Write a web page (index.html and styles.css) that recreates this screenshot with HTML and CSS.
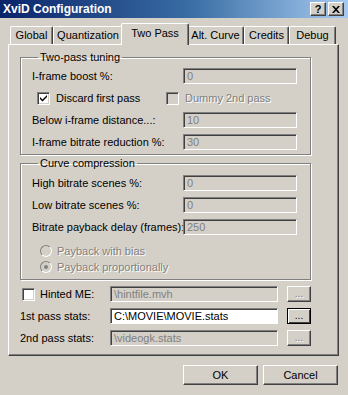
FILE: index.html
```html
<!DOCTYPE html>
<html lang="en">
<head>
    <meta charset="UTF-8">
    <meta name="viewport" content="width=device-width, initial-scale=1.0">
    <title>XviD Configuration</title>
    <link rel="stylesheet" href="styles.css">
</head>
<body>
    <div class="window">
        <div class="titlebar">
            <span class="title">XviD Configuration</span>
            <div class="caption-btns">
                <span class="cbtn help">?</span>
                <span class="cbtn close">
                    <svg width="8" height="7" viewBox="0 0 8 7"><path d="M0 0h2l2 2.2 2-2.2h2l-3 3.5 3 3.5h-2l-2-2.2-2 2.2h-2l3-3.5z" fill="#000"/></svg>
                </span>
            </div>
        </div>

        <div class="tabs">
            <div class="tab t-global">Global</div>
            <div class="tab t-quant">Quantization</div>
            <div class="tab t-two active">Two Pass</div>
            <div class="tab t-alt">Alt. Curve</div>
            <div class="tab t-credits">Credits</div>
            <div class="tab t-debug">Debug</div>
        </div>

        <div class="panel">
            <fieldset class="group group-tuning">
                <legend>Two-pass tuning</legend>
                <div class="field-row">
                    <label>I-frame boost %:</label>
                    <div class="edit disabled">0</div>
                </div>
                <div class="check-row">
                    <div class="check-item discard">
                        <span class="checkbox checked">
                            <svg width="7" height="7" viewBox="0 0 7 7"><path d="M0 2l2.5 2.5L7 0v2L2.5 6.5 0 4z" fill="#000"/></svg>
                        </span>
                        <span>Discard first pass</span>
                    </div>
                    <div class="check-item dummy dim">
                        <span class="checkbox disabled"></span>
                        <span>Dummy 2nd pass</span>
                    </div>
                </div>
                <div class="field-row">
                    <label>Below i-frame distance...:</label>
                    <div class="edit disabled">10</div>
                </div>
                <div class="field-row">
                    <label>I-frame bitrate reduction %:</label>
                    <div class="edit disabled">30</div>
                </div>
            </fieldset>

            <fieldset class="group group-curve">
                <legend>Curve compression</legend>
                <div class="field-row">
                    <label>High bitrate scenes %:</label>
                    <div class="edit disabled">0</div>
                </div>
                <div class="field-row">
                    <label>Low bitrate scenes %:</label>
                    <div class="edit disabled">0</div>
                </div>
                <div class="field-row">
                    <label>Bitrate payback delay (frames):</label>
                    <div class="edit disabled">250</div>
                </div>
                <div class="radios dim">
                    <div class="radio-item"><span class="radio"></span><span>Payback with bias</span></div>
                    <div class="radio-item"><span class="radio on"></span><span>Payback proportionally</span></div>
                </div>
            </fieldset>

            <div class="file-rows">
                <div class="file-row">
                    <div class="file-label hinted">
                        <span class="checkbox"></span>
                        <span>Hinted ME:</span>
                    </div>
                    <div class="edit disabled wide">\hintfile.mvh</div>
                    <div class="btn small dim">...</div>
                </div>
                <div class="file-row">
                    <div class="file-label">1st pass stats:</div>
                    <div class="edit wide">C:\MOVIE\MOVIE.stats</div>
                    <div class="btn small default">...</div>
                </div>
                <div class="file-row">
                    <div class="file-label">2nd pass stats:</div>
                    <div class="edit disabled wide">\videogk.stats</div>
                    <div class="btn small dim">...</div>
                </div>
            </div>
        </div>

        <div class="dialog-btns">
            <div class="btn push">OK</div>
            <div class="btn push">Cancel</div>
        </div>
    </div>
</body>
</html>
```

FILE: styles.css
```css
body {
    margin: 0;
    background: #d4d0c8;
    font-family: "Liberation Sans", Arial, sans-serif;
    font-size: 11px;
    color: #000;
}
.window {
    width: 348px;
    height: 395px;
    background: #d4d0c8;
    overflow: hidden;
}
.titlebar {
    height: 18px;
    background: linear-gradient(to right, #0a246a 0%, #3a6ea5 55%, #a6caf0 100%);
    display: flex;
    align-items: center;
    justify-content: space-between;
    padding: 0 4px 0 3px;
}
.title {
    color: #fff;
    font-weight: bold;
    font-size: 12px;
}
.caption-btns {
    display: flex;
    gap: 2px;
}
.cbtn {
    width: 16px;
    height: 14px;
    box-sizing: border-box;
    background: #d4d0c8;
    border-top: 1px solid #fff;
    border-left: 1px solid #fff;
    border-right: 1px solid #404040;
    border-bottom: 1px solid #404040;
    box-shadow: inset -1px -1px 0 #808080;
    display: flex;
    align-items: center;
    justify-content: center;
    font-weight: bold;
    font-size: 11px;
    line-height: 1;
}

/* tabs */
.tabs {
    display: flex;
    align-items: flex-end;
    height: 26px;
    padding-left: 10px;
}
.tab {
    height: 18px;
    box-sizing: border-box;
    border-top: 1px solid #fff;
    border-left: 1px solid #fff;
    border-right: 1px solid #404040;
    box-shadow: inset -1px 0 0 #808080;
    border-radius: 2px 2px 0 0;
    text-align: center;
    line-height: 17px;
    white-space: nowrap;
}
.tab.active {
    margin: 0 -2px -1px;
    position: relative;
    z-index: 1;
    background: #d4d0c8;
    line-height: 18px;
    height: 22px;
}
.t-global { width: 43px; }
.t-quant { width: 70px; }
.t-two { width: 68px; }
.t-alt { width: 57px; }
.t-credits { width: 45px; }
.t-debug { width: 47px; }

/* panel */
.panel {
    margin-left: 8px;
    width: 331px;
    height: 312px;
    box-sizing: border-box;
    border-top: 1px solid #fff;
    border-left: 1px solid #fff;
    border-right: 1px solid #404040;
    border-bottom: 1px solid #404040;
    box-shadow: inset -1px -1px 0 #808080;
    padding: 5px 0 0 11px;
}
.group {
    margin: 0;
    width: 291px;
    box-sizing: border-box;
    border: 1px solid #808080;
    box-shadow: inset 1px 1px 0 #fff, 1px 1px 0 #fff;
    padding: 4px 0 4px 11px;
    display: flex;
    flex-direction: column;
    gap: 6px;
}
.group legend {
    margin-left: 6px;
    padding: 0 2px;
    line-height: 14px;
}
.group-curve {
    margin-top: 1px;
    padding-top: 5px;
    padding-bottom: 5px;
}
.field-row {
    display: flex;
    align-items: center;
    height: 16px;
}
.field-row label {
    width: 151px;
    white-space: nowrap;
}
.edit {
    width: 114px;
    height: 16px;
    box-sizing: border-box;
    border-top: 1px solid #808080;
    border-left: 1px solid #808080;
    border-right: 1px solid #fff;
    border-bottom: 1px solid #fff;
    box-shadow: inset 1px 1px 0 #404040;
    background: #fff;
    padding-left: 3px;
    line-height: 14px;
    white-space: nowrap;
    overflow: hidden;
}
.edit.disabled {
    background: #d4d0c8;
    color: #808080;
}
.edit.wide {
    width: 168px;
}
.dim {
    color: #808080;
    text-shadow: 1px 1px 0 #fff;
}

.check-row {
    display: flex;
    height: 16px;
    align-items: center;
}
.check-item {
    display: flex;
    align-items: center;
    gap: 6px;
    white-space: nowrap;
}
.discard {
    margin-left: 5px;
    width: 129px;
}
.checkbox {
    width: 13px;
    height: 13px;
    box-sizing: border-box;
    border-top: 1px solid #808080;
    border-left: 1px solid #808080;
    border-right: 1px solid #fff;
    border-bottom: 1px solid #fff;
    box-shadow: inset 1px 1px 0 #404040, inset -1px -1px 0 #d4d0c8;
    background: #fff;
    display: flex;
    align-items: center;
    justify-content: center;
    flex-shrink: 0;
}
.checkbox.disabled {
    background: #d4d0c8;
}

.radios {
    display: flex;
    flex-direction: column;
    gap: 2px;
    margin-top: 3px;
    padding-left: 8px;
}
.radio-item {
    display: flex;
    align-items: center;
    gap: 5px;
    height: 14px;
}
.radio {
    width: 12px;
    height: 12px;
    box-sizing: border-box;
    border-radius: 50%;
    border: 1px solid;
    border-color: #808080 #fff #fff #808080;
    background: #d4d0c8;
    display: flex;
    align-items: center;
    justify-content: center;
}
.radio.on::after {
    content: "";
    width: 4px;
    height: 4px;
    border-radius: 50%;
    background: #808080;
}

/* file rows */
.file-rows {
    display: flex;
    flex-direction: column;
    gap: 6px;
    margin-top: 6px;
}
.file-row {
    display: flex;
    align-items: center;
    height: 16px;
}
.file-label {
    width: 90px;
    display: flex;
    align-items: center;
    gap: 5px;
    white-space: nowrap;
}
.file-label.hinted {
    margin-left: 2px;
    width: 88px;
}
.btn {
    box-sizing: border-box;
    background: #d4d0c8;
    border-top: 1px solid #fff;
    border-left: 1px solid #fff;
    border-right: 1px solid #404040;
    border-bottom: 1px solid #404040;
    box-shadow: inset -1px -1px 0 #808080;
    display: flex;
    align-items: center;
    justify-content: center;
}
.btn.small {
    width: 24px;
    height: 16px;
    margin-left: 9px;
    font-size: 10px;
    line-height: 1;
}
.btn.default {
    border: 1px solid #000;
    box-shadow: inset 1px 1px 0 #fff, inset -1px -1px 0 #404040;
}

.dialog-btns {
    display: flex;
    justify-content: flex-end;
    gap: 5px;
    padding: 9px 10px 0 0;
}
.btn.push {
    width: 75px;
    height: 20px;
}
```
